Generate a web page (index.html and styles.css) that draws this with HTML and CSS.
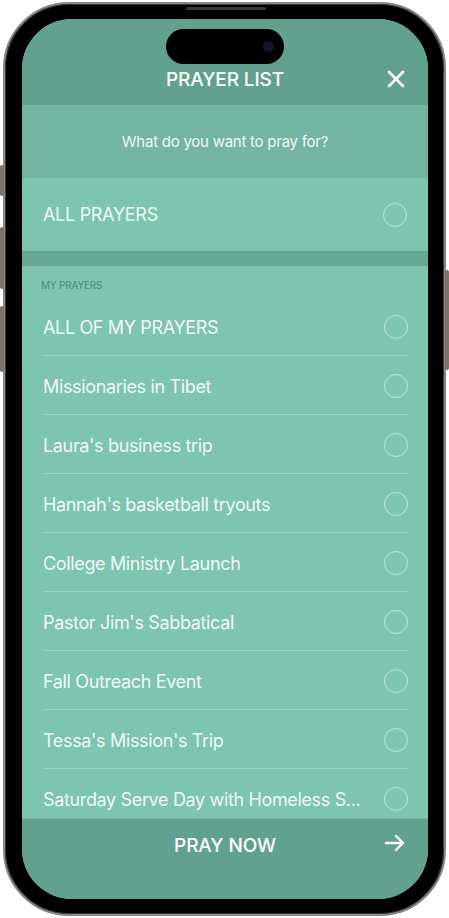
FILE: index.html
```html
<!DOCTYPE html>
<html lang="en">
<head>
    <meta charset="UTF-8">
    <meta name="viewport" content="width=device-width, initial-scale=1.0">
    <title>Prayer List</title>
    <link rel="stylesheet" href="styles.css">
</head>
<body>
    <div class="phone">
        <span class="side-btn action"></span>
        <span class="side-btn vol-up"></span>
        <span class="side-btn vol-down"></span>
        <span class="side-btn power"></span>
        <span class="speaker"></span>

        <div class="screen">
            <div class="island"><span class="island-cam"></span></div>

            <header class="top-bar">
                <h1>PRAYER LIST</h1>
                <button class="close" aria-label="Close">
                    <svg width="18" height="18" viewBox="0 0 18 18">
                        <path d="M2 2 L16 16 M16 2 L2 16" stroke="#fff" stroke-width="2.6" stroke-linecap="round" fill="none"/>
                    </svg>
                </button>
            </header>

            <div class="question">What do you want to pray for?</div>

            <div class="all-row">
                <span>ALL PRAYERS</span>
                <span class="radio"></span>
            </div>

            <div class="gap-band"></div>

            <section class="list">
                <div class="list-label">MY PRAYERS</div>
                <ul class="rows">
                    <li><span>ALL OF MY PRAYERS</span><span class="radio"></span></li>
                    <li><span>Missionaries in Tibet</span><span class="radio"></span></li>
                    <li><span>Laura's business trip</span><span class="radio"></span></li>
                    <li><span>Hannah's basketball tryouts</span><span class="radio"></span></li>
                    <li><span>College Ministry Launch</span><span class="radio"></span></li>
                    <li><span>Pastor Jim's Sabbatical</span><span class="radio"></span></li>
                    <li><span>Fall Outreach Event</span><span class="radio"></span></li>
                    <li><span>Tessa's Mission's Trip</span><span class="radio"></span></li>
                    <li><span>Saturday Serve Day with Homeless S...</span><span class="radio"></span></li>
                </ul>
            </section>

            <footer class="pray-bar">
                <div class="pray-now">
                    <span>PRAY NOW</span>
                    <svg class="arrow" width="22" height="18" viewBox="0 0 22 18">
                        <path d="M2 9 H19 M12 2 L19 9 L12 16" stroke="#fff" stroke-width="2.4" stroke-linecap="round" stroke-linejoin="round" fill="none"/>
                    </svg>
                </div>
                <div class="home-bar"></div>
            </footer>
        </div>
    </div>
</body>
</html>
```

FILE: styles.css
```css
* {
    box-sizing: border-box;
}
body {
    margin: 0;
    padding: 2px 3px;
    background: #fff;
    font-family: Inter, "Noto Sans", sans-serif;
}
.phone {
    position: relative;
    width: 443px;
    height: 914px;
    padding: 15px 16px 15px 17px;
    background: #000;
    border: 2px solid #8f877f;
    border-radius: 66px;
    box-shadow: inset 0 0 0 1px #3e3935;
}
.side-btn {
    position: absolute;
    width: 4px;
    background: #7a736c;
    border-radius: 2px;
}
.action { left: -5px; top: 161px; height: 31px; }
.vol-up { left: -5px; top: 223px; height: 62px; }
.vol-down { left: -5px; top: 302px; height: 66px; }
.power { right: -5px; top: 266px; height: 100px; }
.speaker {
    position: absolute;
    top: 3px;
    left: 181px;
    width: 80px;
    height: 3px;
    border-radius: 2px;
    background: #3a3632;
}
.screen {
    position: relative;
    height: 880px;
    display: flex;
    flex-direction: column;
    overflow: hidden;
    border-radius: 50px;
    background: #7dc5b1;
    color: #fff;
}
.island {
    position: absolute;
    z-index: 2;
    top: 10px;
    left: 144px;
    width: 118px;
    height: 35px;
    border-radius: 18px;
    background: #000;
}
.island-cam {
    position: absolute;
    right: 10px;
    top: 12px;
    width: 11px;
    height: 11px;
    border-radius: 50%;
    background: #15152a;
}
.top-bar {
    position: relative;
    flex: none;
    height: 86px;
    padding-top: 49px;
    background: #62a08f;
    text-align: center;
}
.top-bar h1 {
    margin: 0;
    font-size: 19px;
    line-height: 24px;
    font-weight: 500;
    letter-spacing: -0.1px;
}
.close {
    position: absolute;
    right: 23px;
    top: 51px;
    padding: 0;
    border: 0;
    background: none;
    line-height: 0;
}
.question {
    flex: none;
    height: 73px;
    display: flex;
    align-items: center;
    justify-content: center;
    background: #73b4a3;
    font-size: 15px;
    letter-spacing: -0.25px;
    color: rgba(255, 255, 255, 0.92);
}
.all-row {
    flex: none;
    height: 73px;
    display: flex;
    align-items: center;
    justify-content: space-between;
    padding: 0 21px;
    font-size: 18px;
    letter-spacing: -0.3px;
    color: rgba(255, 255, 255, 0.92);
}
.gap-band {
    flex: none;
    height: 15px;
    background: #66a997;
}
.radio {
    flex: none;
    width: 24px;
    height: 24px;
    border: 1.5px solid rgba(255, 255, 255, 0.5);
    border-radius: 50%;
}
.list {
    flex: 1;
    min-height: 0;
    overflow: hidden;
}
.list-label {
    padding: 14px 19px 7px;
    font-size: 10px;
    line-height: 10px;
    letter-spacing: -0.2px;
    color: #4f8878;
}
.rows {
    list-style: none;
    margin: 0;
    padding: 0 20px 0 21px;
}
.rows li {
    height: 59px;
    display: flex;
    align-items: center;
    justify-content: space-between;
    gap: 20px;
    padding-top: 2px;
    border-bottom: 1px solid rgba(255, 255, 255, 0.22);
    font-size: 18px;
    letter-spacing: -0.35px;
    white-space: nowrap;
    color: rgba(255, 255, 255, 0.92);
}
.pray-bar {
    flex: none;
    height: 81px;
    background: #62a08f;
    border-top: 1px solid rgba(255, 255, 255, 0.18);
}
.pray-now {
    position: relative;
    padding-top: 15px;
    text-align: center;
    font-size: 19px;
    line-height: 24px;
    font-weight: 500;
    letter-spacing: -0.1px;
}
.arrow {
    position: absolute;
    right: 22px;
    top: 15px;
}
.home-bar {
    width: 145px;
    height: 5px;
    margin: 42px auto 0;
    border-radius: 3px;
    background: #111;
}
```
